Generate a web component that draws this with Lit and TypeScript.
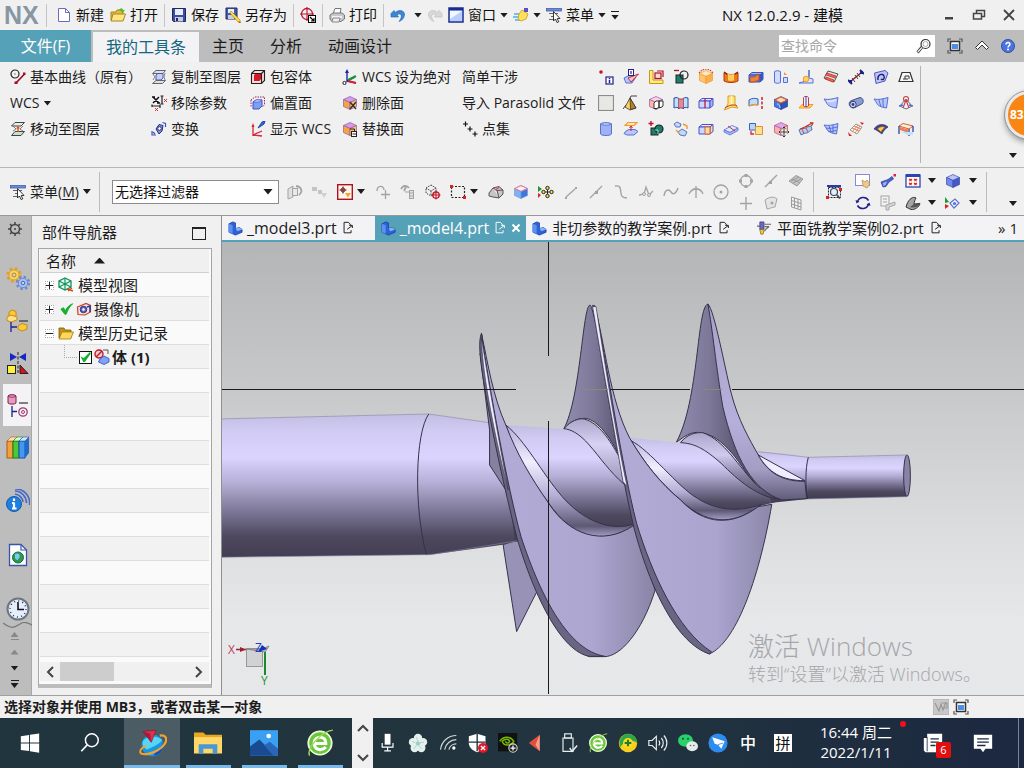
import { LitElement, html, css, nothing } from "lit";
import { customElement, property } from "lit/decorators.js";
import { classMap } from "lit/directives/class-map.js";
import { unsafeSVG } from "lit/directives/unsafe-svg.js";

/* ---------- small drawing helpers ---------- */
const P = (d: string, f = "none", s = "none", w = 1) =>
  `<path d="${d}" fill="${f}" stroke="${s}" stroke-width="${w}"/>`;
const L = (d: string, s = "#444", w = 1) => P(d, "none", s, w);
const C = (x: number, y: number, r: number, f = "none", s = "none", w = 1) =>
  `<circle cx="${x}" cy="${y}" r="${r}" fill="${f}" stroke="${s}" stroke-width="${w}"/>`;
const R = (x: number, y: number, w: number, h: number, f = "none", s = "none", sw = 1) =>
  `<rect x="${x}" y="${y}" width="${w}" height="${h}" fill="${f}" stroke="${s}" stroke-width="${sw}"/>`;
const cube = (t: string, l: string, r: string, s = "none") =>
  P("M8 1.5 14.500 4.500 8 7.500 1.500 4.500Z", t, s, 0.7) +
  P("M1.500 4.500 8 7.500V14.500L1.500 11.500Z", l, s, 0.7) +
  P("M14.500 4.500 8 7.500V14.500L14.500 11.500Z", r, s, 0.7);
const box = (t: string, f: string, r: string, s: string) =>
  P("M1 6 4 3.500H15L12 6Z", t, s) +
  P("M1 6H12V13H1Z", f, s) +
  P("M12 6 15 3.500V10.500L12 13Z", r, s);
const surf = (f: string, s: string) => P("M1 4C5 5 10 4 15 2.500L13.500 13C9 12.500 6 11 4.500 9.500C3.500 7.500 2.500 6 1 4Z", f, s);

const blue = "#5570d8", lb = "#b9c6f8", navy = "#20208a", red = "#d22", or = "#f39a2b", ye = "#ffd35a", br = "#b4601a", gy = "#a3a3a3";

const ICONS: Record<string, string> = {
  /* quick access */
  new: P("M2.500 1.500H9.500L13.500 5.500V14.500H2.500Z", "#fff", "#6b6cc0") + L("M9.500 1.500V5.500H13.500", "#6b6cc0"),
  open: P("M1 5H6L7 3H13V13H1Z", "#e9b93b", "#a98420") + P("M3 7H15.500L13 14H1Z", "#ffe680", "#a98420") + P("M8 4C10 0 13 1 13 3L15 3L12.500 6L10 3.500C10 3 9 3 8 4Z", "#5dbb3c"),
  save: P("M1.500 1.500H14.500V14.500H2.500L1.500 13.500Z", "#3d4ea0", "#1c2660") + R(4, 2, 8, 6, "#e8ecff") + R(4, 10, 8, 4.500, "#c9cede") + R(5, 11, 2, 3, "#1c2660"),
  saveas: P("M1 1H12V12H1Z", "#4a5aa6", "#1c2660") + R(3, 2, 6, 4, "#e8ecff") + R(3, 8, 6, 4, "#c9cede") + P("M6 4 15 13 15.500 15.500 13 15 5 6Z", "#ffdb3c", "#a98420", 0.6) + P("M14 14 16 16 13.500 15.500Z", "#d22"),
  target: C(7, 7, 5.500, "none", "#c01030", 1.300) + L("M7 0V14M0 7H14", "#c01030", 1.100) + R(8.500, 8.500, 7, 7, "#fff", "#000") + L("M10 10 14 14M14 11V14H11", "#000", 1.100),
  print: P("M4 7 6 1.500H12L11 7Z", "#fff", "#777") + P("M1 8 4 6H13L15.500 8V12L12 14.500H3L1 12Z", "#c4c8d0", "#777") + L("M3 10H13", "#fff", 1.500) + P("M4 11H11L10 15H3Z", "#eee", "#888"),
  undo: P("M1 6.500 4 3.500 5.500 5.500C9 2 15 3.500 14.500 8C14 11.500 12 13.500 9 14.500C11.500 11.500 12.500 7.500 9.500 7C8.500 7 7.500 7.500 7 8L8.500 10H1Z", "#3c86d8", "#2465b0", 0.600),
  redo: P("M15 6.500 12 3.500 10.500 5.500C7 2 1 3.500 1.500 8C2 11.500 4 13.500 7 14.500C4.500 11.500 3.500 7.500 6.500 7C7.500 7 8.500 7.500 9 8L7.500 10H15Z", "#d8d8d8", "#bcbcbc", 0.600),
  window: R(1, 1, 14, 14, "#dbe6ff", "#1a2c94", 1.500) + P("M2 4H14V14H2Z", "#b9d0ff") + P("M2 4H14L2 12Z", "#f3f7ff") + R(1, 1, 14, 2.500, "#1a2c94"),
  touch: L("M1 7H7M0 10H6M2 13H7", "#4ab0e8", 1.500) + P("M6 7 9 3 12 5 15 7 13 12 8 14 5 12Z", "#ffe05c", "#d9a820") + P("M11 1H15V5H11Z", "#5b50c8"),
  menu: R(0.500, 1.500, 15, 2.500, "#6f8ad4", "#4460b0", 0.800) + L("M3 6.500H12M5 9.500H12M3 12.500H12", "#666", 1.200) + P("M7.500 4.500V14L9.500 12 11 15.500 12.800 14.800 11.200 11.500H14Z", "#fff", "#222", 0.900),
  /* search row */
  mag: C(9.500, 6, 4.500, "#fff", "#333", 1.200) + C(9.500, 6, 2.500, "none", "#999", 0.800) + L("M6 9 1.500 14.500", "#333", 2.800) + L("M6 9.300 1.800 14", "#fff", 1.200),
  full: L("M1 4V1H4M12 1H15V4M15 12V15H12M4 15H1V12", "#555", 1.200) + R(3.500, 3.500, 9, 9, "#fff", "#333", 1.500) + R(5, 6, 6, 5, "#4c8ee8"),
  chev: P("M8 3 14.500 9.500 12.500 11.500 8 7 3.500 11.500 1.500 9.500Z", "#fff", "#333"),
  help: C(8, 8, 7.500, "#4a74dc", "#2c4ca8") + L("M5.800 6.200C6 3 10.500 3.400 10.200 6.200C10 7.800 8 7.800 8 9.800", "#fff", 1.800) + R(7, 11, 2, 2, "#fff"),
  /* ribbon, named commands */
  basic: C(5, 5, 4, "none", "#222", 1.200) + R(4.500, 4.500, 1, 1, "#222") + L("M6 14 14.500 5", "#a01020", 1.800) + R(4.500, 12.500, 3, 2.500, "#a01020") + R(13, 3.500, 2.500, 2.500, "#a01020"),
  layer: P("M5 1.500H14.500L11 5H1.500Z", "#e3f0ea", "#444") + P("M5 10.500H14.500L11 14.500H1.500Z", "#bfe3cf", "#444") + L("M3 5 6 8 3 10M13 5 10 8 13 10", "#666", 0.800) + P("M8 5 10 7.500H8.700V11H7.300V7.500H6Z", "#e0501a"),
  copylayer: P("M5 1.500H14.500L12 4.500H1.500Z", "#dde0e8", "#666") + P("M5 6 7 4.500H12V9L10 11H5Z", "#c9d0f5", "#4a5aa8") + P("M5 11.500H14.500L11.500 14.500H1.500Z", "#dde0e8", "#666") + L("M2 5 4 8 2 11M14 4 13 8 14 11", "#777", 0.900),
  param: L("M2 2 8 8M8 2 2 8M1 2H4M6 8H9", "#111", 1.500) + L("M11 1V9M9.500 1H12.500M9.500 9H12.500M1 12V9.500M1 11H9M9 9.500V13", "#222", 1.200) + L("M13 4 16 7M16 4 13 7M4 13 7 16M7 13 4 16", "#d23040", 1),
  xform: P("M5 8 8 3.500 12 4.500 11 10 8 13Z", "#8a92e0", "#23307a") + C(8.500, 7.500, 1.800, "#fff", "#23307a") + L("M1 10V14H5M2 11 4 13M11.500 1.500 14.500 2.500V6", "#3a55c0", 1.200),
  bound: P("M1.500 4.500 4.500 1.500H14.500V11.500L11.500 14.500H1.500Z", "#f7dada", "#222", 1.100) + P("M4 6 6 4.500H11V10L9.500 12H4Z", "#d81828") + L("M1.500 4.500H11.500V14.500M11.500 4.500 14.500 1.500", "#222", 1.100),
  offset: P("M3 7 6 5H12V11L9 14H3Z", "#7f9df2", "#3b55c8") + P("M3 7 6 5H12L9 7Z", "#dfe6ff", "#3b55c8", 0.700) + `<path d="M1 5 5 2H14.500V10L12 12M1 5V12" fill="none" stroke="#b22060" stroke-dasharray="1.500 1"/>`,
  showcs: L("M3 4V14L12 10M3 14 12 15", "#d22838", 1.300) + P("M1.500 6 3 2 4.500 6Z", "#d22838") + P("M8 7 12 1 15 0 14 3Z", "#3566d8", "#2346a8"),
  wcs: L("M5 2V12L13 8M5 12 14 14", "#1b2aa0", 1.400) + L("M6 11 14 7", "#169a3a", 2) + L("M6 12 14 14", "#d82030", 2) + C(2.500, 14, 1.600, "#fff", "#222") + P("M3 4 5 0 7 4Z", "#1b2aa0"),
  delface: cube("#d79be8", "#f7a53a", "#ffc070", "#8c5ab0") + L("M8 7 14 14M14 7 8 14", "#333", 1.500),
  repface: cube("#d79be8", "#f7a53a", "#ffc070", "#8c5ab0") + R(9.500, 10.500, 5, 5, "#fff", "#222") + L("M8 8H12.500V10.500M10.500 13H14", "#222", 1),
  points: L("M1 3H6M3.500 0.500V5.500M5.500 8H10.500M8 5.500V10.500M10.500 13H15.500M13 10.500V15.500", "#111", 1.200),
  /* icon gallery */
  a1: C(3, 3, 1.800, "#c11528") + R(8, 8, 7, 7, "#fff", navy, 1.200) + L("M11.500 9V10.300M11.500 11V14", navy, 1.500),
  a2: P("M1 9 6 6.500 13 8 9 14 3 14Z", lb, blue) + P("M5 9 15.500 5 8 13Z", "#f8c4c4", "#c03040") + R(5.500, 0.500, 5, 6, "#fff", navy) + L("M8 2V5", navy, 1.200),
  a3: P("M1.500 1.500H5V11H15V14.500H1.500Z", "#ffe88a", "#c8980c") + R(7, 4, 6, 5.500, "#fbd9d9", "#b01020", 1.200) + L("M9 2H15V8", "#b01020", 1.200),
  a4: L("M1 1.500H6", "#b01020", 1.300) + R(3, 6, 7, 8, "#1a7f6c", "#222") + C(11, 6, 4, "none", "#222", 1.200),
  a5: cube("#ffe9c0", "#fdc56f", "#f9b04c", or) + `<path d="M1 4 4 1 8 0 12 1 15 4" fill="none" stroke="#d8401e" stroke-width="1.200" stroke-dasharray="1.500 1"/>`,
  a6: P("M1 4C5 6 11 6 15 4V12C11 14 5 14 1 12Z", "#f07818", "#a83c10") + P("M5 5V11.500C7 12 9 12 11 11.500V5C9 5.500 7 5.500 5 5Z", "#ffcf5a") + L("M1 3 4 5M15 3 12 5", "#7a2408", 1.500),
  a7: box("#9ab4ff", "#5f86e8", "#3558c8", "#3a55b8") + P("M2 8H6L11 5V11L6 13H2Z", "#f08038", "#b84818", 0.800),
  a8: P("M1.500 2.500C3 1.500 6 1.500 7.500 2.500V13.500C6 14.500 3 14.500 1.500 13.500Z", "#d4dcfb", blue) + P("M10.500 8.500H14.500V13.500H10.500Z", "#d4dcfb", blue) + P("M11 3 14 6 11 6Z", or),
  a9: L("M11 1V7", "#3a70c8", 1.500) + P("M1 14C6 13 9 11 11 7V9L15 10V14Z", "#dbe6f8", blue) + C(8, 10, 2.800, ye, or),
  a10: P("M1 9 5 2 15 5 11 13Z", "#dbe9ee", "#555") + P("M4 4 13 7 12 9 3 6ZM3 8 11 11 10 13 2 10Z", "#f06a50", "#b82020", 0.700),
  a11: L("M2 13 14 3", "#a01020", 1.400) + L("M4 9 7 13M7 6 10 10M9 4 12 8", "#444", 1) + L("M0 11 4 15M12 1 16 5", navy, 2) + R(1, 11, 3, 3, navy) + R(12, 2, 3, 3, navy),
  a12: P("M1.500 4 12 1.500 15 4 12 12 3 14.500Z", lb, "#5a50c8") + L("M5 11C4 5 10 4 11 7C12 9 10 12 8 10", "#222060", 1.400),
  a13: P("M4 3.500H12L15 12.500H1Z", "#f8f8f8", "#333", 1.200) + L("M5 10H10M7 7H11V10M7 7V10", "#333", 1),
  b1: R(0.500, 0.500, 15, 15, "#e7e7e3", "#8c8c8c", 1.200),
  b2: P("M7 3 13 13 7 15 2 12Z", ye, "#333", 0.800) + P("M7 3 13 13 7.500 14.500Z", "#b98028", "#333", 0.800) + L("M7 3 8 1H14M3 10 0 14", "#444"),
  b3: cube("#ffd0e0", "#ffb7a0", "#f4d45c", "#8c5ab0") + P("M6 8 8 6H11V12L9 13.500H6ZM11 6H15V11L13 12.500H11Z", "#fff", "#222", 0.900),
  b4: P("M1 3C4 2 6 3 6 4V14C5 12 3 12 1 13ZM15 3C12 2 10 3 10 4V14C11 12 13 12 15 13Z", "#bfe0f8", "#2a4aa0") + R(6, 4, 4, 9, "#fbd0d0", "#c02030", 0.800) + L("M8 4V13", "#c02030", 0.800),
  b5: box("#e9edff", "#cdd6fb", "#a5b4f4", "#4a50c8") + L("M7 4V13", "#b01040", 1.200),
  b6: P("M5 1H12V9L15 13 9 12 1 15 5 9Z", "#ffe27a", "#d8a028") + L("M8.500 1V9", "#fff6cc", 1.500) + L("M2 13C6 10 11 9 14 11", "#c03020"),
  b7: P("M1 5C4 3 7 3 10 4V10C7 9 4 10 1 11Z", "#c4ddf6", "#2a5ac0") + P("M1 11C4 9.500 7 9 10 10", "none", or, 1.500) + `<path d="M14 2V14" stroke="#d02020" stroke-width="1.500" stroke-dasharray="3 1.500"/>`,
  b8: cube("#fff", "#4a74e0", "#2c55b8", "#28409a") + P("M2 5 8 2 14 5 8 8Z", "#ffd8b0", "#d8501e") + L("M4 9C6 9 7 10 7 13", "#bcd0ff"),
  b9: P("M1 13 4 9.500H15L12 13Z", ye, or) + P("M5.500 2.500C6 1 10 1 10.500 2.500V11C10 12 6 12 5.500 11Z", "#f8ecf6", "#c04040") + L("M8 1V12", "#3a46c0"),
  b10: surf(lb, blue) + L("M4 6C7 7 10 6 13 5", "#e4eaff", 1.500),
  b11: P("M5 5 12 2.500C15 3 16 6 14.500 8.500L6 13C2 13 0 9 2 6.500Z", "#8a9dd0", "#3c4d90") + C(5, 9.500, 3.200, "#cdd7f6", "#2c3d80") + C(5, 9.500, 1.400, "#33406f"),
  b12: surf(lb, blue) + L("M6 5C6.500 7 7 9 8 11.500M10 4C10 7 10 10 10.500 12.500", blue),
  b13: P("M8 4 14 11 8 14 2 11Z", "#eef1ff", "#667") + L("M8 5 5 13M8 5 11 13", "#c84040", 1.100) + C(8, 4, 2.500, "none", "#c84040", 1.100) + L("M1 11 5 10M11 10 15 11", "#5570d8", 1.600),
  c1: P("M2.500 3C4 1.500 12 1.500 13.500 3V13C12 15 4 15 2.500 13Z", "#9fb2f2", blue) + P("M2.500 3C4 1.500 12 1.500 13.500 3C12 4.500 4 4.500 2.500 3Z", "#e3e9ff", blue),
  c2: P("M5 1.500H14L11 4.500H2Z", "#ffe8c4", or, 1.200) + P("M3 10 6 8.500H12L15 10.500 11 14H4L1 12.500Z", lb, blue) + L("M8 5V10M6.500 7 8 5 9.500 7", "#d22"),
  c3: L("M3 0V5M0.500 2.500H5.500", "#c01028", 1.400) + R(3, 7, 7, 7, "#1a7f6c", "#222") + C(11, 8, 4, "#1a7f6c", "#222", 1.200) + L("M7 9H10V13", "#8fd8c8"),
  c4: P("M1 3 4 1 8 3 7 6 3 6ZM5 11 9 8 14 11 12 15 7 14Z", "#c4d6fa", "#3a5ab0", 0.800) + L("M10 3 14 5V8M3 9 6 12", or, 1.400),
  c5: box("#e9edff", "#cdd6fb", "#ffd8a0", "#4a50c8") + P("M7 6H12V13H7Z", "#ffdca8", "#d86030"),
  c6: P("M1 9 9 4.500 15 7 7 11.500Z", "#e2e8ff", blue, 0.800) + P("M1 9V11L7 14 15 9.500V7L7 11.500Z", "#a9b8f4", blue, 0.800) + L("M5 5 12 10", "#c83040"),
  c7: P("M1.500 2.500H7.500V9H1.500Z", "#b9d6f6", "#2a6ac0") + P("M7.500 5.500H14.500V13.500H7.500Z", "#ffdf90", "#e09030") + L("M3 10V13H6", "#d24", 1.300),
  c8: cube("#dda8f0", "#f7b0aa", "#f9c06a", "#b05090") + L("M11 6V16M6 11H16", "#fff", 3) + L("M11 6V16M6 11H16M9.500 7.500 11 6 12.500 7.500M9.500 14.500 11 16 12.500 14.500M7.500 9.500 6 11 7.500 12.500M14.500 9.500 16 11 14.500 12.500", "#222", 0.900),
  c9: P("M1 9C4 6 6 9 9 6L13 5 14 9C12 9 10 13 7 12L3 14Z", "#b4cbf4", "#3a5aa0", 0.800) + L("M2 8C6 7 9 5 14 2M12 1.500 15 2 13.500 5", "#c83020", 1.200) + L("M4 8 6 13M8 7 10 11", "#c83020", 0.800),
  c10: surf(lb, blue) + L("M3 7C7 8 10 7 14 6M5 10C7 11 10 10 13.500 9.500M6 5 8 11M10 4V12", blue),
  c11: P("M2 9 8 3 14 6 9 13Z", "#fff8ec", "#999") + L("M4 7 11 10M6 5 13 8M4 11 10 4M7 12 12 5", "#d87850", 0.900) + P("M0 11 4 15 1 15ZM12 1 16 2 14 4Z", "#d22"),
  c12: P("M1 8C4 3 11 2 15 6C12 8 10 10 9 13C6 11 4 9 1 8Z", "#3a4896", "#28306c", 0.700) + P("M4.500 8C6.500 5.500 10 5 12 6.500C10 8 9 9 8 11C7 10 6 9 4.500 8Z", "#ffcf4a", br, 0.700),
  c13: P("M1 5 5 2.500 15 5 11 8Z", "#fff0dc", "#d86030") + L("M1 5V13M11 8V15M15 5V11", "#2a44a0", 1.300) + P("M2 6 10.500 8.500V12L2 9Z", "#e8805a") + P("M3 11 10 14H15V11H8Z", "#bfe0ff"),
  /* selection bar */
  s1: P("M1 5 6 2V13L1 15Z", "#e0e0e0", gy) + R(5.500, 4.500, 5, 7, "#e8e8e8", gy) + L("M9 2C15 3 16 8 12 11", gy, 1.800),
  s2: P("M0 3H5V7H0ZM6 6H10V10H6Z", "#c4c4c4") + P("M9 9H15L12 14Z", "#d0d0d0"),
  s3: R(0.700, 0.700, 14.600, 14.600, "#fff7ee", "#b01020", 1.400) + L("M6 2.500V9.500M2.500 6H9.500", "#422", 1.100) + C(6, 6, 2, "none", "#822") + P("M8 9H14L11 13.500Z", "#f5a623"),
  s4: L("M2 7C2 1 9 1 9 6M6 10.500H15M10.500 6V15", gy, 1.300),
  s5: L("M1 5C3 1 7 1 9 4M4 7 6 3", gy, 1.800) + R(9.500, 6.500, 4, 8, "#e4e4e4", gy) + L("M5 8H9M10 9H14M10 12H14", gy, 1),
  s6: `<path d="M6 1 11 4V9L6 12 1 9V4ZM1 4 6 7 11 4M6 7V12" fill="none" stroke="#444" stroke-dasharray="1.500 1"/>` + C(11, 11, 3.200, "none", "#c01020", 1.300) + L("M11 6.500V15.500M6.500 11H15.500", "#c01020", 1),
  s7: `<rect x="1.500" y="2.500" width="13" height="11" fill="none" stroke="#222" stroke-width="1.200" stroke-dasharray="2 1.500"/>` + R(0, 1, 3, 3, "#d22") + R(13, 12, 3, 3, "#d22"),
  s8: P("M1 9 5 4 11 2.500 15 6V10L11 14 5 13 1 12Z", "#c6c6c6", "#555") + P("M5 4 9 6.500 11 14M9 6.500 15 6", "#e8e8e8", "#555") + L("M7 6 11 3.500", "#e04858", 1.300),
  s9: cube("#fdeef2", "#7ab4f6", "#3a78dc", "#7a98e0") + L("M1.500 4.500 8 1.500 14.500 4.500 8 7.500Z", "#e87890", 0.900),
  s10: P("M0 2 4 5 0 8Z", "#1a9a30") + P("M0 9 3 11 0 14Z", "#d22") + `<g fill="#f4e43a" stroke="#222"><circle cx="9.500" cy="4" r="1.700"/><circle cx="9.500" cy="12" r="1.700"/><circle cx="5.500" cy="8" r="1.700"/><circle cx="13.500" cy="8" r="1.700"/></g>` + L("M9.500 6V10M7.500 8H11.500", "#222"),
  s11: L("M3 13 12 5", gy, 1.300) + R(12, 3, 2, 2, gy) + R(2, 13, 2, 2, gy),
  s12: L("M2 14 14 2", gy, 1.300) + R(7, 7, 3, 3, gy),
  s13: L("M2 2C9 1 7 6 8 9C8 13 10 14 14 14", gy, 1.400),
  s14: L("M1 11 6 10 8 3 11 11 15 7", gy, 1.300) + C(6, 10, 1.500, "#e4e4e4", gy) + C(11, 11, 1.500, "#e4e4e4", gy),
  s15: L("M1 12C2 5 6 5 8 8C10 11 13 10 15 4", gy, 1.400),
  s16: L("M8 2V14M1 10C3 6 6 5 8 5C11 5 14 7 15 10M5 5H11", gy, 1.300),
  s17: C(8, 8, 7, "none", gy, 1.300) + C(8, 8, 1.500, gy),
  t1: C(8, 8, 5.500, "none", gy, 1.300) + `<g fill="#a3a3a3"><rect x="6.500" y="1" width="3" height="3"/><rect x="6.500" y="12" width="3" height="3"/><rect x="1" y="6.500" width="3" height="3"/><rect x="12" y="6.500" width="3" height="3"/></g>`,
  t2: L("M2 14 14 2", gy, 1.400) + R(6, 8, 3, 3, gy),
  t3: P("M1 8 8 2.500 15 6 9 13Z", "#c4c4c4", "#999") + L("M4 6 12 10M3 8 11 4M5 10 13 6", "#999"),
  t4: L("M8 2V15M2 8.500H14", gy, 1.400),
  t5: P("M2 5C6 2 11 1 14 4L12 12C9 12 6 14 4 14Z", "#e4e4e4", gy) + C(9, 8, 1.500, gy),
  t6: P("M3.500 2 13 5V15L3.500 12Z", "#f2f2f2", "#999") + L("M6.500 3V13M10 4V14M3.500 5.500 13 8.500M3.500 9 13 12", "#999"),
  u1: `<rect x="2.500" y="3.500" width="12" height="10" fill="none" stroke="#224" stroke-dasharray="2 1"/>` + C(8, 8, 3.500, "#dff0ff", "#445", 1.200) + L("M11 11 14 14.500", "#445", 1.800) + R(1, 1, 14, 2, "#2a3aa8") + R(0, 12, 3, 3, "#d22") + R(13, 4, 3, 3, "#d22"),
  v1: R(0.500, 1.500, 14, 11, "#fff", "#8a8ad4") + P("M7 7 10 9 12 7 15 11 12 15 8 13Z", "#eec88a", "#b08a50", 0.700),
  v2: P("M1 9 8 6.500 12 3.500 13.500 6 9 9 6 13.500 3 14Z", "#4a60d4", "#2c3a90", 0.700) + P("M3 10 7 8.500 5.500 12 3.500 13Z", "#a9b8f4") + R(13.500, 1, 2.500, 2.500, "#d24"),
  v3: R(1, 2, 14, 12, "#fff", "#2c44b0", 1.300) + R(1, 1, 14, 3, "#2c44b0") + L("M4 6 7 8M7 6 4 8M9 6 12 8M12 6 9 8M4 10 7 12M7 10 4 12M9 10 12 12M12 10 9 12", "#d22", 1.300),
  v4: cube("#b9c6fb", "#7088ea", "#4658c4", "#3c4ca8"),
  w1: L("M13.500 5.500A6 6 0 0 0 2.500 7M2.500 10.500A6 6 0 0 0 13.500 9", navy, 1.500) + P("M14.500 7.500 15.500 11 11.500 9.500ZM1.500 8.500 0.500 5 4.500 6.500Z", navy),
  w2: R(1, 1, 8, 10, "#f2f2f2", gy) + P("M6 10 15 7V10L9 12V15H6Z", "#d4d4d4", "#aaa") + L("M3 4H7M3 7H7", gy),
  w3: P("M2 9C4 4 8 1 11 3C10 5 9 7 9 9L15 8.500C14 12 10 15 6 14.500L1 12Z", "#a4a4a4", "#333") + P("M9 9 15 8.500C13 12 9 13.500 5 12Z", "#555"),
  w4: P("M0 2 4 7 0 8Z", "#1a9a30") + P("M0 9 4 11 0 14Z", "#d22") + P("M5 8 10 4 14 8 9 13Z", "#eef3ff", "#5a74d0", 1.200) + C(9.500, 8.500, 1.600, "#5a74d0"),
  /* document and tree */
  part: P("M1 3 5 1 8 2V8L12 7 15 9V12L8 15 1 12Z", "#2c62d8", "#1b3f98", 0.800) + P("M1 3 5 4.500V13.500L1 12Z", "#5b91f2") + P("M8 8 12 7 15 9 10 11Z", "#86b0fa"),
  mill: P("M3 1H7.500V9H3Z", "#6a6ab8", "#3a3a88", 0.800) + P("M3 9H7.500L6.500 14H4Z", "#f0c84a", "#8a6a1a", 0.800) + L("M0 5.500H3M8 3.500H15M8 6H13M9 9 13 6M8 11 10 8", "#666", 1.200),
  page: P("M10.500 5V3.500L8.500 1.500H3.500V13.500H11.500V10.500", "none", "currentColor", 1.100) + L("M7 9.500 12.500 5.500M9.500 5H13V8", "currentColor", 1.100),
  views: P("M7 1 13 4V10L7 13 1 10V4Z", "#e6fff0", "#159060", 1.300) + L("M7 1V13M1 4 13 10M13 4 1 10", "#159060", 1.200) + L("M9 12 15 14M10 14 14 11", "#e04820", 1.500),
  check: P("M1 8 4 6.500 6 10C8 6 11 3 14.500 2C11 5 9 9 7 14H5.500Z", "#12b030", "#12b030"),
  cam: P("M1.500 6 10 2.500 14.500 4.500V11L9 14 2 13.500Z", "#f3e0e8", "#c8402a", 1.200) + C(7.500, 8.500, 3.300, "#5b62b8", "#222860", 0.800) + C(7.500, 8.500, 1.300, "#fff") + L("M11 6 14 5V11", "#2a3a98", 1.500),
  folder: P("M1 3H6L7 5H13V13H1Z", "#c89018", "#7a5a10", 0.800) + P("M4 7H15.500L12.500 14H1Z", "#ffd858", "#a07818", 0.800),
  body: C(5, 5, 4, "#f4d0d0", "#c01828", 1.400) + L("M2 8 8 2", "#c01828", 1.400) + P("M6 10 10 7 15 9.500V13L10 15.500 4.500 13Z", "#7ea2f4", "#2a4ab8", 0.800) + L("M9 1H14V5", "#555"),
  /* resource bar, 24-unit artwork */
  gear: C(8, 8, 4.500, "none", "#444", 1.500) + C(8, 8, 1, "#444") + L("M8 1V4M8 12V15M1 8H4M12 8H15M3 3 5 5M11 11 13 13M3 13 5 11M11 5 13 3", "#444", 1.500),
  gears: `<circle cx="8" cy="8" r="6.500" fill="none" stroke="#e0a020" stroke-width="2.500" stroke-dasharray="2.600 2.500"/>` + C(8, 8, 5, "#fbd468", "#e0a020") + C(8, 8, 2, "#d0d0d0", "#b88818") + `<circle cx="17" cy="16" r="6" fill="none" stroke="#6a8ad8" stroke-width="2.500" stroke-dasharray="2.400 2.300"/>` + C(17, 16, 4.700, "#a9c2f4", "#6a8ad8") + C(17, 16, 1.800, "#d0d0d0", "#4a68b8"),
  asm: P("M3 3 6 1 10 2.500V7L6 8.500 3 7Z", "#fbc93a", "#c88c10") + P("M1 8 5 6 11 8V11L5 13 1 11.500Z", "#fde08a", "#c88c10") + L("M5 13V23M5 18H11", navy, 1.300) + L("M13 12H22", "#333", 1.200) + P("M12 17 16 14.500 21 16V20L16 22 12 20Z", "#fbc93a", "#c88c10"),
  mates: P("M4 2 11 6 4 10ZM20 2 13 6 20 10Z", "#1428c8") + `<path d="M12 1V23" stroke="#222" stroke-dasharray="3 1.500"/>` + R(1.500, 14.500, 8, 8, "#fdf23a", "#222") + P("M14 14 22 22.500H14Z", "#d81020", "#222"),
  hist: P("M2 3C3 1.500 9 1.500 10 3V10C9 11.500 3 11.500 2 10Z", "#e0a0bc", "#8c1858") + P("M2 3C3 1.500 9 1.500 10 3C9 4.500 3 4.500 2 3Z", "#f8d8e4", "#8c1858") + L("M13 10H22", "#333", 1.200) + L("M6 13V24M6 18.500H11", navy, 1.300) + C(17, 19, 4.200, "none", "#a03870", 1.300) + C(17, 19, 1.500, "none", "#a03870"),
  books: P("M1 6H7V23H1Z", "#f5a03a", "#a85c10") + P("M1 6 5 2H11L7 6Z", "#ffe0b0", "#a85c10", 0.600) + P("M7 6H13V23H7Z", "#4cc838", "#1c7a18") + P("M7 6 11 2H17L13 6Z", "#d8f8c8", "#1c7a18", 0.600) + P("M13 6H19V23H13Z", "#3f9af0", "#1c50a8") + P("M13 6 17 2H23L19 6Z", "#d0e8ff", "#1c50a8", 0.600) + P("M19 6 23 2V18L19 23Z", "#2468c8"),
  info: C(8, 15, 7.500, "#1e80e0", "#1558a8") + L("M8 9.500V12M8 13.500V19.500M6 14H8M6 19.500H10.500", "#fff", 2.200) + L("M9 5A9 9 0 0 1 17 13M9 2A12 12 0 0 1 20.500 14M9 0A14 14 0 0 1 23.500 16", "#4468c8", 1.600),
  web: P("M3.500 1.500H15L20.500 7V22.500H3.500Z", "#fff", "#3a55a8", 1.300) + L("M15 1.500V7H20.500", "#3a55a8", 1.200) + C(12, 14.500, 5.500, "#2a9a50", "#1a7038") + P("M9 11C13 9 15 13 13 15C12 18 10 17 9 15Z", "#7cc8f8"),
  clock: C(12, 12, 10.500, "#e6eefa", "#6c7680", 2) + `<circle cx="12" cy="12" r="8" fill="none" stroke="#335" stroke-width="1.500" stroke-dasharray="1 3.190"/>` + L("M12 5V12.500H18", "#112", 1.600),
  /* taskbar, 24-unit artwork */
  win: P("M2 4.500 11 3.200V11.500H2ZM12 3 22 1.500V11.500H12ZM2 12.500H11V20.800L2 19.500ZM12 12.500H22V22.500L12 21Z", "#fff"),
  lens: C(14, 9, 7, "none", "#fff", 1.600) + L("M9 14 2.500 21", "#fff", 1.800),
  nx: C(12, 13.500, 9, "#1898e0") + P("M4 10C8 5 16 5 20 9C17 13 12 15 7 17C5 15 3 13 4 10Z", "#58d4f4") + P("M14 20C18 17 20 14 20.500 11C22 17 18 22 13 22Z", "#1050b8") + L("M2 20C9 24 26 14 23 7C22 5 20 5 18 5.500", "#f5a22c", 1.800) + L("M2 20C1 17 4 15 7 14", "#f5a22c", 1.500) + P("M4 2 15 1 11 11Z", "#e03050", "#8c1020", 0.500) + P("M4 2 10 4 11 11Z", "#a81838"),
  files: P("M0 3H8L10 5H24V20H0Z", "#e8a820") + P("M0 7H24V21H0Z", "#ffd868") + P("M4 21V13H20V21H16V17H8V21Z", "#4898d8"),
  photo: R(0, 1, 24, 22, "#3aa0f4") + P("M0 15 8 9 22 23H0Z", "#1a4a90") + P("M12 14 17 11 24 17V23H20Z", "#2a66b8") + C(16, 6, 2, "#fff"),
  ie: C(12, 12, 10.500, "#6cc63c") + C(12, 12, 10, "none", "#eef8e0", 1.500) + L("M7 12.500H17C17.500 5.500 7.500 5 7 12C7 18.500 14 19 17 15.500", "#fff", 2.600) + L("M3 23C0 16 14 2 23 1", "#9ad84a", 1.200),
  mic: P("M8 1H15V14H8Z", "#fff") + L("M5 12V17H18V12M11.500 17V21M7.500 21.500H15.500", "#fff", 1.400),
  flower: `<g fill="#e4f0ec"><circle cx="12" cy="6" r="5"/><circle cx="18" cy="11" r="5"/><circle cx="16" cy="18" r="5"/><circle cx="8" cy="18" r="5"/><circle cx="6" cy="11" r="5"/></g>` + C(12, 12.500, 2.500, "#98d0c4") + L("M12 10 10 5M14 12 19 11M13 15 16 19M10 15 7 19M9 12 5 10", "#a8ccc4", 1),
  wifi: L("M3 20A19 19 0 0 1 22 3M8 20A14 14 0 0 1 22 8M13 20A9 9 0 0 1 22 13", "#d0d8dc", 1.400) + C(19, 18, 2, "#fff"),
  shield: P("M11 1 21 4V12C21 17 16 21 11 23C5 21 1 17 1 12V4Z", "#fff") + L("M11 1V22M1 11H21", "#203038", 1.600) + C(18, 18, 6, "#e01828") + L("M15.500 15.500 20.500 20.500M20.500 15.500 15.500 20.500", "#fff", 1.600),
  nvidia: R(0, 0, 23, 22, "#111") + L("M2 10C7 3 15 4 19 10C15 16 7 16 5 10C9 6 13 7 14 10C12 13 9 12 9 10", "#76b900", 1.800) + C(18, 18, 5, "#222", "#ddd", 1.300) + L("M18 15V21M15 18H21", "#fff", 1.500),
  horn: P("M1 12 6 8 14 2V22L6 16Z", "#e05038") + P("M14 2V22L9 14Z", "#f4a090"),
  usb: R(8, 1, 8, 5, "none", "#e8eef0", 1.400) + P("M6 6H18V22H6Z", "none", "#e8eef0", 1.400) + L("M14 18 17 22 23 15", "#e8eef0", 1.800),
  plus: C(12, 12, 11, "#f8d020") + P("M12 1A11 11 0 0 1 23 12C18 8 8 8 3 17A11 11 0 0 1 12 1Z", "#28a848") + C(12, 12, 6, "#ffd820") + L("M12 8V16M8 12H16", "#188030", 2.500),
  sound: P("M1 9H5L10 4V20L5 15H1Z", "none", "#e8eef0", 1.400) + L("M13 9A5 5 0 0 1 13 15M16 6A9 9 0 0 1 16 18M19 3A13 13 0 0 1 19 21", "#e8eef0", 1.400),
  wechat: `<ellipse cx="9" cy="9" rx="9" ry="7.500" fill="#2ad06a"/><ellipse cx="17" cy="16" rx="7" ry="6" fill="#e4ece8"/>` + C(6, 7, 1.200, "#105030") + C(12, 7, 1.200, "#105030") + C(15, 15, 1, "#667") + C(19, 15, 1, "#667"),
  bird: C(12, 12, 11.500, "#2d8cf0") + P("M5 5 20 10 16 19 12 14 8 13Z", "#fff") + L("M12 14 18 12", "#2d8cf0"),
  news: P("M5 1H23V23H3L1 21V6H5Z", "#fff") + L("M5 5V22", "#1d2c40", 1) + L("M9 7H19M9 11H19M9 15H15", "#1d2c40", 1.600),
  chat: P("M1 2H23V19H15L12 23 9 19H1Z", "#fff") + L("M5 7H19M5 11H19M5 15H15", "#1c2a40", 1.600),
  scan: R(0, 0, 16, 16, "#c8c8c8", "#aaa") + L("M2 4 6 12 8 5 10 11 13 3M9 4H14V9H10", "#999", 1.200),
};

const icon = (name: string, size = 16, box = 16) => html`
  <svg class="ico" width=${size} height=${size} viewBox="0 0 ${box} ${box}" aria-hidden="true">
    ${unsafeSVG(ICONS[name])}
  </svg>`;

const base = css`
  * { box-sizing: border-box; }
  button {
    font: inherit; color: inherit; background: none; border: 0; padding: 0; margin: 0;
    display: flex; align-items: center; justify-content: center; white-space: nowrap;
  }
  .ico { display: block; flex: none; }
  .caret {
    display: block; width: 8px; height: 5px; flex: none; background: #1c1c1c;
    clip-path: polygon(0 0, 100% 0, 50% 100%);
  }
  .up { clip-path: polygon(50% 0, 100% 100%, 0 100%); }
`;

/* ---------- title bar ---------- */
@customElement("nx-titlebar")
class NxTitlebar extends LitElement {
  static styles = [base, css`
    :host { display: flex; align-items: center; height: 30px; background: #f0f0f0; font-size: 14px; color: #111; }
    .logo { font: bold 25px/30px "Liberation Sans", Arial, sans-serif; color: #8796a3; padding-left: 4px; width: 46px; }
    .sep { width: 1px; height: 23px; background: #c4c4c4; }
    .group { display: flex; align-items: center; gap: 6px; padding: 0 6px; }
    .tool { gap: 4px; height: 26px; }
    .file { padding-left: 9px; }
    .split { gap: 8px; }
    .last { padding-right: 0; gap: 5px; }
    .over { border-top: 1px solid #1c1c1c; padding-top: 3px; }
    .name { flex: 1; text-align: center; font-size: 15px; font-weight: 400; margin: 0; padding-left: 12px; }
    .win { display: flex; }
    .win button { width: 30px; height: 30px; }
  `];
  render() {
    const caret = html`<i class="caret"></i>`;
    return html`
      <span class="logo">NX</span><span class="sep"></span>
      <div class="group file">
        <button class="tool">${icon("new")}新建</button>
        <button class="tool">${icon("open")}打开</button>
      </div>
      <span class="sep"></span>
      <div class="group">
        <button class="tool">${icon("save")}保存</button>
        <button class="tool">${icon("saveas")}另存为</button>
      </div>
      <span class="sep"></span>
      <div class="group"><button class="tool" aria-label="定向视图">${icon("target")}</button></div>
      <span class="sep"></span>
      <div class="group"><button class="tool">${icon("print")}打印</button></div>
      <span class="sep"></span>
      <div class="group last">
        <button class="tool split" aria-label="撤销">${icon("undo")}${caret}</button>
        <button class="tool split" aria-label="重做">${icon("redo")}</button>
        <button class="tool">${icon("window")}窗口${caret}</button>
        <button class="tool" aria-label="触控模式">${icon("touch")}${caret}</button>
        <button class="tool">${icon("menu")}菜单${caret}</button>
        <button class="over" aria-label="更多">${caret}</button>
      </div>
      <h1 class="name">NX 12.0.2.9 - 建模</h1>
      <div class="win">
        <button aria-label="最小化"><svg width="12" height="12">${unsafeSVG(R(2, 8, 8, 2.5, "#444"))}</svg></button>
        <button aria-label="还原"><svg width="14" height="14">${unsafeSVG(L("M4.5 5V2.500H12.500V8.500H10", "#444", 1.5) + R(1.5, 5.5, 8, 5.5, "none", "#444", 1.5))}</svg></button>
        <button aria-label="关闭"><svg width="12" height="12">${unsafeSVG(L("M1 1 11 11M11 1 1 11", "#444", 1.8))}</svg></button>
      </div>`;
  }
}

/* ---------- ribbon ---------- */
const COMMANDS: { width: string; items: [string, string, boolean?][] }[] = [
  { width: "141px", items: [["basic", "基本曲线（原有）"], ["", "WCS", true], ["layer", "移动至图层"]] },
  { width: "99px", items: [["copylayer", "复制至图层"], ["param", "移除参数"], ["xform", "变换"]] },
  { width: "92px", items: [["bound", "包容体"], ["offset", "偏置面"], ["showcs", "显示 WCS"]] },
  { width: "120px", items: [["wcs", "WCS 设为绝对"], ["delface", "删除面"], ["repface", "替换面"]] },
  { width: "131px", items: [["", "简单干涉"], ["", "导入 Parasolid 文件"], ["points", "点集"]] },
];
const GALLERY = ["a", "b", "c"].flatMap((r) => Array.from({ length: 13 }, (_, i) => `${r}${i + 1}`));

@customElement("nx-ribbon")
class NxRibbon extends LitElement {
  static styles = [base, css`
    :host { display: block; font-size: 14px; color: #1c1c1c; }
    .tabs { display: flex; height: 32px; background: #bdbdbd; font-size: 16px; }
    .tab { padding: 0 13px; }
    .file { width: 91px; background: #55a1b8; color: #fff; margin-right: 2px; }
    .on { background: #f3f3f5; color: #15667f; margin-top: 2px; }
    .tail { margin-left: auto; display: flex; align-items: center; gap: 11px; padding-right: 9px; }
    .find { display: flex; align-items: center; width: 156px; height: 22px; background: #fff; padding-right: 3px; margin-right: 1px; }
    .find input { flex: 1; min-width: 0; border: 0; outline: 0; background: none; font: inherit; font-size: 14px; padding: 0 2px; }
    .find input::placeholder { color: #a6a6a6; opacity: 1; }
    .body { position: relative; display: flex; height: 106px; padding: 2px 0 0 10px; background: #f0f0f0; border-bottom: 1px solid #b8b8b8; overflow: hidden; }
    .col { flex: none; }
    .cmd { height: 26px; gap: 4px; justify-content: flex-start; }
    .gallery { display: grid; grid-template-columns: repeat(13, 25px); grid-auto-rows: 26px; align-content: start; }
    .end { width: 1px; background: #b4b4b4; margin: 2px 0 4px 2px; }
    .more { margin: auto 7px 9px auto; }
    .bubble {
      position: absolute; right: -29px; top: 29px; width: 48px; height: 48px; border-radius: 50%;
      background: #f98612; border: 3px solid #e9e9e9; outline: 1px solid #999; box-shadow: 0 3px 6px #0006; color: #fff;
      font: bold 12px/42px "Open Sans", sans-serif; padding-left: 2px;
    }
  `];
  render() {
    return html`
      <nav class="tabs">
        <button class="tab file">文件(F)</button>
        <button class="tab on">我的工具条</button>
        <button class="tab">主页</button>
        <button class="tab">分析</button>
        <button class="tab">动画设计</button>
        <div class="tail">
          <label class="find"><input type="text" placeholder="查找命令" aria-label="查找命令" />${icon("mag")}</label>
          <button aria-label="全屏">${icon("full")}</button>
          <button aria-label="折叠功能区">${icon("chev")}</button>
          <button aria-label="帮助">${icon("help", 14)}</button>
        </div>
      </nav>
      <div class="body">
        ${COMMANDS.map((c) => html`<div class="col" style="width:${c.width}">
          ${c.items.map(([i, t, drop]) => html`<button class="cmd">${i ? icon(i) : nothing}${t}${drop ? html`<i class="caret"></i>` : nothing}</button>`)}
        </div>`)}
        <div class="gallery">${GALLERY.map((n) => html`<button aria-label="命令">${icon(n)}</button>`)}</div>
        <div class="end"></div>
        <button class="more" aria-label="功能区选项"><i class="caret"></i></button>
        <span class="bubble">83</span>
      </div>`;
  }
}

/* ---------- selection bar ---------- */
@customElement("nx-selectbar")
class NxSelectbar extends LitElement {
  static styles = [base, css`
    :host { display: flex; align-items: center; height: 48px; background: #f0f0f0; border-bottom: 1px solid #989898; font-size: 14px; color: #1c1c1c; }
    .menu { gap: 4px; padding-left: 10px; width: 99px; justify-content: flex-start; }
    u { text-underline-offset: 2px; }
    .sep { width: 1px; height: 40px; background: #bcbcbc; flex: none; }
    .filter { position: relative; margin: 0 3px 0 12px; display: flex; align-items: center; }
    .filter select { appearance: none; font: inherit; color: #111; width: 167px; height: 24px; padding: 0 2px; background: #fff; border: 1px solid #8c8c8c; border-radius: 0; }
    .filter .caret { position: absolute; right: 6px; pointer-events: none; width: 10px; height: 6px; }
    .i { width: 25px; height: 24px; flex: none; }
    .d { width: 10px; height: 20px; flex: none; margin: 0 4px 0 -1px; }
    .grid { display: grid; grid-template-columns: repeat(3, 25px); grid-auto-rows: 22px; padding-right: 5px; box-sizing: content-box; }
    .views { display: grid; grid-template-columns: 25px 25px 25px 14px 27px 14px; grid-auto-rows: 22px; padding-right: 6px; }
    .u { width: 32px; margin-left: 4px; }
    .more { margin: auto 7px 9px auto; }
  `];
  render() {
    const b = (n: string) => html`<button class="i" aria-label="选择工具">${icon(n)}</button>`;
    const d = html`<button class="d" aria-label="展开"><i class="caret"></i></button>`;
    const g = (n: string) => html`<button aria-label="视图工具">${icon(n)}</button>`;
    const gd = html`<button aria-label="展开"><i class="caret"></i></button>`;
    return html`
      <button class="menu">${icon("menu")}<span>菜单(<u>M</u>)</span><i class="caret"></i></button>
      <span class="sep"></span>
      <span class="filter"><select aria-label="选择过滤器"><option>无选择过滤器</option></select><i class="caret"></i></span>
      ${["s1", "s2", "s3"].map(b)}${d}${["s4", "s5", "s6", "s7"].map(b)}${d}
      ${["s8", "s9", "s10", "s11", "s12", "s13", "s14", "s15", "s16", "s17"].map(b)}
      <div class="grid">${["t1", "t2", "t3", "t4", "t5", "t6"].map(g)}</div>
      <span class="sep"></span>
      <button class="u" aria-label="适合窗口">${icon("u1")}</button>
      <div class="views">${["v1", "v2", "v3"].map(g)}${gd}${g("v4")}${gd}${["w1", "w2", "w3"].map(g)}${gd}${g("w4")}${gd}</div>
      <span class="sep"></span>
      <button class="more" aria-label="更多"><i class="caret"></i></button>`;
  }
}

/* ---------- resource bar + navigator ---------- */
@customElement("nx-navigator")
class NxNavigator extends LitElement {
  static styles = [base, css`
    :host { display: flex; flex: none; width: 222px; color: #1c1c1c; font-size: 15px; border-right: 1px solid #8f8f8f; background: #f0f0f0; }
    .bar { width: 32px; background: #bdbdbd; display: flex; flex-direction: column; padding-left: 3px; border-right: 1px solid #a8a8a8; }
    .bar button { height: 42px; flex: none; padding-left: 2px; }
    .bar .gear { height: 26px; margin: 0 5px 16px 0; padding: 0; }
    .bar .on { background: #f3f3f5; }
    .bar .tall { height: 54px; }
    .bar .gap { margin-top: 6px; }
    .bar .mini { height: 16px; margin-right: 5px; padding: 0; }
    .wave { flex: none; margin-top: -8px; }
    .dim { background: #888; }
    .line { border-top: 1px solid #1c1c1c; padding-top: 2px; }
    .line2 { border-bottom: 1px solid #888; padding-bottom: 2px; }
    .panel { flex: 1; min-width: 0; padding: 0 9px 7px 6px; display: flex; flex-direction: column; }
    .head { display: flex; align-items: center; justify-content: space-between; height: 32px; padding: 0 6px 0 4px; }
    .head h2 { font-size: 15px; font-weight: 400; margin: 0; }
    .max { width: 14px; height: 13px; border: 1px solid #222; border-top-width: 2px; margin-top: 2px; }
    .box { flex: 1; min-height: 0; border: 1px solid #a5a5a5; border-bottom: 4px solid #bcbcbc; display: flex; flex-direction: column; padding: 0 2px 3px 1px; background: #fafafa; }
    .cols { display: flex; align-items: center; gap: 18px; height: 24px; flex: none; background: #f0f0f0; padding-left: 6px; border-bottom: 1px solid #d0d0d0; }
    .cols .caret { width: 11px; height: 6px; }
    .rows { flex: 1; min-height: 0; overflow: hidden; margin: 0; padding: 0; list-style: none;
      background: repeating-linear-gradient(#fafafa 0 23px, #dedede 23px 24px, #f2f2f2 24px 47px, #dedede 47px 48px); }
    .row { display: flex; align-items: center; height: 24px; padding-left: 5px; gap: 4px; }
    .exp { width: 9px; height: 9px; border: 1px dotted #aaa; position: relative; background: #fff; flex: none; }
    .exp::before, .exp.plus::after { content: ""; position: absolute; background: #222; left: 0; top: 3px; width: 7px; height: 1px; }
    .exp.plus::after { left: 3px; top: 0; width: 1px; height: 7px; }
    .near { gap: 2px; }
    .near .exp { margin-right: 4px; }
    .kid { font-weight: 700; padding-left: 24px; gap: 2px; }
    .kid::before { content: ""; width: 12px; height: 12px; margin-top: -12px; border: 1px dotted #aaa; border-width: 0 0 1px 1px; }
    input { appearance: none; width: 13px; height: 13px; margin: 0; border: 1px solid #111; background: #fff; }
    input::before { content: ""; display: block; width: 11px; height: 11px; background: #12b030; clip-path: polygon(5% 45%, 35% 60%, 90% 5%, 100% 15%, 45% 95%, 30% 95%); }
    .scroll { display: flex; align-items: center; height: 19px; background: #f0f0f0; flex: none; margin-top: 3px; }
    .scroll button { width: 20px; height: 19px; }
    .thumb { width: 54px; height: 19px; background: #cdcdcd; margin-right: auto; }
  `];
  render() {
    const arrow = (d: string) => html`<svg width="8" height="12">${unsafeSVG(L(d, "#444", 2))}</svg>`;
    return html`
      <div class="bar">
        <button class="gear" aria-label="资源条选项">${icon("gear")}</button>
        <button aria-label="装配">${icon("gears", 24, 24)}</button>
        <button aria-label="装配导航器">${icon("asm", 24, 24)}</button>
        <button aria-label="约束导航器">${icon("mates", 24, 24)}</button>
        <button class="on" aria-label="部件导航器">${icon("hist", 24, 24)}</button>
        <button aria-label="重用库">${icon("books", 24, 24)}</button>
        <button class="tall gap" aria-label="HD3D 工具">${icon("info", 24, 24)}</button>
        <button class="tall" aria-label="Web 浏览器">${icon("web", 24, 24)}</button>
        <button class="gap" aria-label="历史记录">${icon("clock", 24, 24)}</button>
        <svg class="wave" width="29" height="6" viewBox="0 0 29 6">${unsafeSVG(L("M0 1C9 8 12 5 17 2C21 -1 25 1 29 3", "#777", 1.2))}</svg>
        <button class="mini" aria-label="首页"><span class="line2"><i class="caret up dim"></i></span></button>
        <button class="mini" aria-label="上移"><i class="caret up dim"></i></button>
        <button class="mini" aria-label="下移"><i class="caret"></i></button>
        <button class="mini" aria-label="末页"><span class="line"><i class="caret"></i></span></button>
      </div>
      <section class="panel">
        <div class="head"><h2>部件导航器</h2><button class="max" aria-label="最大化"></button></div>
        <div class="box">
          <div class="cols">名称<i class="caret up"></i></div>
          <ul class="rows">
            <li class="row"><i class="exp plus"></i>${icon("views")}模型视图</li>
            <li class="row near"><i class="exp plus"></i>${icon("check", 14)}${icon("cam")}摄像机</li>
            <li class="row"><i class="exp"></i>${icon("folder")}模型历史记录</li>
            <li class="row kid"><input type="checkbox" id="solid" checked />${icon("body")}<label for="solid">体 (1)</label></li>
          </ul>
          <div class="scroll"><button aria-label="向左">${arrow("M7 1 2 6 7 11")}</button><span class="thumb"></span><button aria-label="向右">${arrow("M1 1 6 6 1 11")}</button></div>
        </div>
      </section>`;
  }
}

/* ---------- model viewport ---------- */
const TABS = [
  { icon: "part", name: "_model3.prt", wide: true },
  { icon: "part", name: "_model4.prt", wide: true, on: true },
  { icon: "part", name: "非切参数的教学案例.prt" },
  { icon: "mill", name: "平面铣教学案例02.prt" },
];

type Stops = [number, string][];
const stopTags = (stops: Stops) => stops.map(([o, c]) => `<stop offset="${o}" stop-color="${c}"/>`).join("");
const grad = (id: string, y1: number, y2: number, stops: Stops) =>
  `<linearGradient id="${id}" gradientUnits="userSpaceOnUse" x1="0" x2="0" y1="${y1}" y2="${y2}">${stopTags(stops)}</linearGradient>`;
const hgrad = (id: string, x1: number, x2: number, stops: Stops) =>
  `<linearGradient id="${id}" gradientUnits="userSpaceOnUse" x1="${x1}" x2="${x2}" y1="0" y2="0">${stopTags(stops)}</linearGradient>`;
const round: Stops = [[0, "#c3bee4"], [0.12, "#d2ccf4"], [0.3, "#dad4ff"], [0.48, "#b5afd6"], [0.68, "#7c7797"], [0.86, "#4d485e"], [1, "#433e53"]];
const edge = "#37324c";

const SCREW = `
<defs>
${grad("cyl", 375, 800, round)}${grad("coneB", 410, 720, round)}${grad("coneC", 445, 670, round)}${grad("coneD", 485, 635, round)}${grad("tip", 497, 622, round)}
${hgrad("back2", 500, 650, [[0, "#8e89ab"], [0.5, "#7d7898"], [1, "#5c5772"]])}
${hgrad("back3", 830, 1000, [[0, "#8e89ab"], [0.5, "#7d7898"], [1, "#5c5772"]])}
${hgrad("face1", 340, 755, [[0, "#b0aad4"], [0.55, "#aca6d1"], [1, "#8a85a6"]])}
${hgrad("face2", 700, 1090, [[0, "#b0aad4"], [0.6, "#aaa4cf"], [1, "#8e89ab"]])}
${grad("fil1", 420, 740, [[0, "#bbb5de"], [0.3, "#f1eeff"], [0.62, "#b4aed6"], [0.9, "#5d5873"], [1, "#a6a0c8"]])}
${grad("fil2", 450, 690, [[0, "#bbb5de"], [0.35, "#f1eeff"], [0.65, "#b4aed6"], [0.88, "#5d5873"], [1, "#a6a0c8"]])}
${grad("top2", 385, 580, [[0, "#aaa4c8"], [0.4, "#d8d3f5"], [1, "#9a95b8"]])}
${grad("top3", 425, 625, [[0, "#aaa4c8"], [0.35, "#cfcaee"], [0.7, "#7d7898"], [1, "#4a455b"]])}
${grad("front3", 45, 625, [[0, "#a9a3cb"], [0.6, "#b5afdb"], [0.85, "#a49ec5"], [1, "#645f7c"]])}
</defs>
<g transform="translate(400 290) scale(0.338 0.3333)" stroke-linejoin="round">
${P("M305 764 345 1025 405 905 370 740Z", "#9892b6", edge)}
${P("M-540 387 85 372 313 405 400 412V740L305 764 90 794-540 802Z", "url(#cyl)")}
${P("M300 404 485 417 690 447 720 700 690 706 340 756Z", "url(#coneB)")}
${P("M660 441 830 458 1070 487 1110 637 980 668 700 690Z", "url(#coneC)")}
${P("M1040 483 1160 492 1208 502V627L1100 638Z", "url(#coneD)")}
${P("M1206 502 1500 495V620L1206 627Z", "url(#tip)")}
<ellipse cx="1500" cy="557" rx="10" ry="62" fill="#8984a6" stroke="${edge}"/>
${L("M-540 387 85 372 313 405M-540 802 90 794 350 752M1206 502 1500 495M1206 627 1500 620M1060 485 1208 502", "#8a85a4", 0.600)}
${L("M85 372C45 430 40 650 78 794M1208 502C1198 540 1200 590 1206 627", edge)}
${P("M485 416C535 320 540 50 562 45C575 50 610 280 645 490C600 400 560 380 538 386C510 388 500 405 485 416Z", "url(#back2)", edge)}
${P("M485 416C505 392 530 384 545 387C590 400 620 450 648 500L662 582C620 545 590 500 560 465C530 430 505 418 485 416Z", "url(#top2)", edge)}
${P("M818 456C885 330 878 50 911 42C925 90 950 330 1000 480L1060 600C1010 530 960 430 880 427C850 427 830 450 818 456Z", "url(#back3)", edge)}
${P("M830 458C850 432 875 427 895 428C960 450 1000 530 1060 590L1130 628C1060 625 1000 570 950 520C900 475 870 460 830 458Z", "url(#top3)", edge)}
${P("M237 190 265 420V525L313 600 300 480Z", "#86819f", edge)}
${P("M313 405C370 450 420 550 480 620C540 690 620 725 688 703L692 708C590 770 510 740 440 640C390 570 340 490 313 405Z", "url(#fil1)", edge)}
${P("M241 130C260 220 275 320 313 405C345 490 385 560 440 640C500 735 600 770 692 706L755 900C715 1030 650 1100 605 1100H560C480 1070 390 870 350 720C310 560 260 300 241 130Z", "url(#face1)", edge)}
${P("M241 130C232 150 236 200 245 260C270 420 310 600 345 740C400 930 480 1085 560 1099H605C500 1080 420 930 358 740C318 590 265 300 241 130Z", "#6a6582", edge)}
${P("M241 145C243 240 272 400 320 600C300 490 272 340 250 200Z", "#efedff", edge, 0.600)}
${P("M683 452C740 480 820 590 880 625C940 665 1010 665 1070 643L1060 650C980 710 900 700 830 630C760 570 720 510 683 452Z", "url(#fil2)", edge)}
${P("M575 46C605 150 620 330 680 445C720 515 770 580 830 630C900 705 980 710 1060 650L1100 643C1060 880 990 1060 915 1092C830 1050 730 840 692 700C650 520 600 200 575 46Z", "url(#face2)", edge)}
${P("M570 46C605 260 640 480 690 705C740 900 820 1060 915 1092L922 1086C820 1020 745 850 700 700C655 520 615 240 578 50Z", "#6a6582", edge)}
${P("M570 50 580 50C607 230 642 450 672 590L660 575C630 400 598 220 570 50Z", "#efedff", edge, 0.600)}
${P("M911 42C930 60 960 230 980 310C1000 390 1035 450 1060 495C1095 560 1145 574 1198 574L1203 626 1130 630C1040 600 990 500 955 350C935 230 925 120 911 42Z", "url(#front3)", edge)}
${P("M1060 495 1198 572C1130 572 1090 548 1060 495Z", "#efedff", edge)}
</g>
<g stroke="#1a1a1a" fill="none"><path d="M222 389.500H516M610 389.500H690M732 389.500H1024M548.500 242V356M548.500 421V694"/><path d="M583 389.500H608M703 389.500H722" stroke="#8a8878"/></g>
<g>${R(246.500, 648.500, 16, 18, "#d2d2d4", "#999")}${L("M236 649.500H246", "#a02030", 1.500)}${P("M240 647 246 649.500 240 652Z", "#a02030")}${L("M265 652V675", "#1a8a2a", 2)}${P("M246 649H262L269 646 265 652Z", "#bbb", "#888")}${P("M258 652 262 645 267 649Z", "#1030c0")}</g>
<g font-family="Open Sans, sans-serif" font-size="12"><text x="228" y="654" fill="#c04060">X</text><text x="255" y="652" fill="#2040c0">Z</text><text x="261" y="685" fill="#30903c">Y</text></g>`;

@customElement("nx-viewport")
class NxViewport extends LitElement {
  static styles = [base, css`
    :host { display: flex; flex-direction: column; flex: 1; min-width: 0; color: #1c1c1c; }
    .tabs { display: flex; height: 26px; background: #f3f3f6; border-bottom: 2px solid #55a1b8; font-size: 15px; flex: none; }
    .tab { gap: 5px; padding: 0 20px 0 6px; }
    .wide { font-size: 16px; gap: 4px; }
    .tab.on { background: #55a1b8; color: #fff; padding-right: 5px; }
    .x { width: 10px; height: 10px; }
    .rest { margin-left: auto; padding-right: 6px; }
    .canvas { position: relative; flex: 1; min-height: 0; overflow: hidden; background: linear-gradient(#b4b5b6, #c7c8c9 32%, #dddedf 66%, #e7e8ea 85%, #e6e7e8); }
    .scene { position: absolute; inset: 0; width: 100%; height: 100%; }
    .scene path, .scene ellipse { vector-effect: non-scaling-stroke; }
    .mark { position: absolute; right: 43px; bottom: 9px; color: #a6a6a9; white-space: nowrap; }
    .mark p { margin: 0; }
    .big { font-size: 26px; line-height: 32px; font-weight: 300; }
    .small { font-size: 18px; line-height: 24px; font-weight: 300; }
  `];
  render() {
    return html`
      <nav class="tabs">
        ${TABS.map((t) => html`<button class=${classMap({ tab: true, wide: !!t.wide, on: !!t.on })}>
          ${icon(t.icon, 15)}${t.name}${icon("page", 14)}
          ${t.on ? html`<svg class="x" viewBox="0 0 10 10">${unsafeSVG(L("M1.500 1.500 8.500 8.500M8.500 1.500 1.500 8.500", "#fff", 2))}</svg>` : nothing}
        </button>`)}
        <button class="rest">» 1</button>
      </nav>
      <div class="canvas">
        <svg class="scene" viewBox="222 242 802 453" preserveAspectRatio="xMinYMid slice" role="img" aria-label="螺杆模型">${unsafeSVG(SCREW)}</svg>
        <div class="mark"><p class="big">激活 Windows</p><p class="small">转到“设置”以激活 Windows。</p></div>
      </div>`;
  }
}

/* ---------- desktop taskbar ---------- */
@customElement("nx-taskbar")
class NxTaskbar extends LitElement {
  @property() time = "16:44 周二";
  @property() date = "2022/1/11";
  static styles = [base, css`
    :host { display: flex; height: 50px; background: linear-gradient(90deg, #21353e, #21343f 60%, #1c2840); color: #fff; flex: none; }
    .start { width: 60px; }
    .search { width: 60px; margin-right: 4px; }
    .app { width: 56px; position: relative; }
    .app::after { content: ""; position: absolute; left: 6px; right: 5px; bottom: 0; height: 3px; background: #76b9ed; }
    .on { background: #4b5c65; }
    .on::after { left: 0; right: 0; }
    .roll { width: 21px; margin-left: 4px; background: #f0f0f0; display: flex; flex-direction: column; align-items: center; justify-content: space-between; padding: 6px 0; }
    .t { width: 30px; }
    .ime { font-size: 16px; font-weight: 500; }
    .pin { width: 40px; }
    .pin span { background: #fff; color: #111; width: 18px; height: 18px; font-size: 15px; line-height: 18px; }
    .clock { flex: 1; text-align: center; font-size: 15px; line-height: 20px; padding-top: 4px; white-space: nowrap; }
    .note { width: 48px; position: relative; }
    .dot { position: absolute; left: -9px; top: 3px; width: 6px; height: 6px; border-radius: 50%; background: #f01020; }
    .badge { position: absolute; left: 27px; top: 24px; width: 15px; height: 16px; background: #e01010; font-size: 11px; line-height: 16px; border-radius: 2px; }
    .chat { width: 52px; }
    .peek { width: 10px; border-left: 1px solid #7a8490; margin: 0 -4px 0 9px; }
  `];
  render() {
    const tray = ["mic", "flower", "wifi", "shield", "nvidia", "horn", "usb", "ie", "plus", "sound", "wechat", "bird"];
    const v = (d: string) => html`<button aria-label="滚动"><svg width="12" height="8">${unsafeSVG(L(d, "#444", 2))}</svg></button>`;
    return html`
      <button class="start" aria-label="开始">${icon("win", 22, 24)}</button>
      <button class="search" aria-label="搜索">${icon("lens", 22, 24)}</button>
      <button class="app on" aria-label="NX">${icon("nx", 29, 24)}</button>
      <button class="app" aria-label="文件资源管理器">${icon("files", 28, 24)}</button>
      <button class="app" aria-label="照片">${icon("photo", 28, 24)}</button>
      <button class="app" aria-label="浏览器">${icon("ie", 28, 24)}</button>
      <div class="roll">${v("M1 7 6 2 11 7")}${v("M1 1 6 6 11 1")}</div>
      ${tray.map((n) => html`<button class="t" aria-label="托盘图标">${icon(n, 20, 24)}</button>`)}
      <button class="t ime">中</button>
      <button class="pin"><span>拼</span></button>
      <div class="clock">${this.time}<br />${this.date}</div>
      <button class="note" aria-label="资讯">${icon("news", 20, 24)}<i class="dot"></i><span class="badge">6</span></button>
      <button class="chat" aria-label="通知">${icon("chat", 20, 24)}</button>
      <span class="peek"></span>`;
  }
}

@customElement("app-root")
class AppRoot extends LitElement {
  static styles = [base, css`
    :host {
      display: flex; flex-direction: column; height: 100vh; overflow: hidden; background: #f0f0f0;
      font-family: "Open Sans", "Noto Sans CJK SC", sans-serif; line-height: 20px;
    }
    .main { display: flex; flex: 1; min-height: 0; border-bottom: 1px solid #a0a0a0; }
    .status { display: flex; align-items: center; justify-content: space-between; height: 22px; padding: 0 55px 0 4px; font-size: 14px; font-weight: 700; color: #1c1c1c; flex: none; }
    .pair { display: flex; gap: 4px; }
  `];
  render() {
    return html`
      <nx-titlebar></nx-titlebar>
      <nx-ribbon></nx-ribbon>
      <nx-selectbar></nx-selectbar>
      <div class="main"><nx-navigator></nx-navigator><nx-viewport></nx-viewport></div>
      <footer class="status"><span>选择对象并使用 MB3，或者双击某一对象</span><span class="pair">${icon("scan")}${icon("full")}</span></footer>
      <nx-taskbar></nx-taskbar>`;
  }
}
